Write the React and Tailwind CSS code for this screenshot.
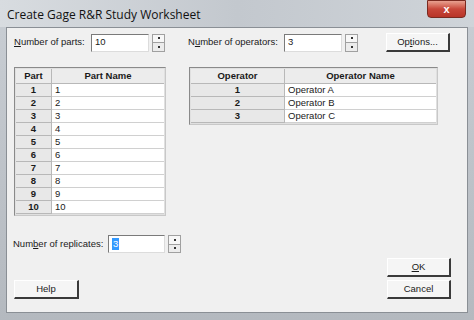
import React from 'react'

const font = { fontFamily: '"Liberation Sans", Arial, sans-serif' }

const Spinner = () => (
    <div className="flex flex-col w-[13px] h-[18px] border border-[#a0a0a0] bg-[#f0f0f0]">
        <div className="flex-1 flex items-center justify-center border-b border-[#a0a0a0] bg-[#f7f7f7]">
            <div className="w-[2px] h-[2px] bg-[#333]" />
        </div>
        <div className="flex-1 flex items-center justify-center bg-[#ececec]">
            <div className="w-[2px] h-[2px] bg-[#333]" />
        </div>
    </div>
)

const Field = ({ value, width, selected }) => (
    <div className={`${width} h-[18px] bg-white border border-t-[#7a7a7a] border-l-[#7a7a7a] border-r-[#dcdcdc] border-b-[#dcdcdc] flex items-center px-[3px] text-[9.5px] text-[#1a1a1a]`}>
        {selected ? <span className="bg-[#3399ff] text-white px-[1px] leading-[12px]">{value}</span> : value}
    </div>
)

const Button = ({ children, width = 'w-[64px]' }) => (
    <div className={`${width} h-[19px] flex items-center justify-center bg-[#f5f5f5] border border-t-[#ffffff] border-l-[#ffffff] border-r-[#3a3a3a] border-b-[#3a3a3a] border-r-2 border-b-2 text-[9.5px] text-[#1a1a1a]`}>
        {children}
    </div>
)

const Label = ({ children, width }) => (
    <div className={`${width} text-[9.5px] text-[#1a1a1a] whitespace-nowrap`}>{children}</div>
)

const parts = ['1', '2', '3', '4', '5', '6', '7', '8', '9', '10']
const operators = ['Operator A', 'Operator B', 'Operator C']

const Grid = ({ idHead, nameHead, idWidth, width, rows }) => (
    <div className={`${width} border border-[#8a8a8a] border-r-[#c8c8c8] border-b-[#c8c8c8] bg-[#e0e0e0] p-px`}>
        <div className="flex h-[15px] text-[9.5px] font-bold text-[#1a1a1a]">
            <div className={`${idWidth} flex items-center justify-center bg-[#ececec] border-r border-b border-[#b8b8b8]`}>{idHead}</div>
            <div className="flex-1 flex items-center justify-center bg-[#ececec] border-b border-[#b8b8b8]">{nameHead}</div>
        </div>
        {rows.map((r, i) => (
            <div key={i} className="flex h-[13px] text-[9.5px] text-[#1a1a1a]">
                <div className={`${idWidth} flex items-center justify-center bg-[#e8e8e8] font-bold border-r border-b border-[#b8b8b8]`}>{i + 1}</div>
                <div className="flex-1 flex items-center bg-white px-[3px] border-b border-[#d0d0d0]">{r}</div>
            </div>
        ))}
    </div>
)

export default function App() {
    return (
        <div className="w-[474px] h-[320px] flex flex-col bg-gradient-to-b from-[#c9ced4] to-[#b4b9bf] overflow-hidden" style={font}>
            {/* Title bar */}
            <div className="h-[27px] flex items-start bg-gradient-to-r from-[#d8dce0] via-[#c3c8ce] to-[#cfd4d9]">
                <div className="pl-[7px] pt-[6px] text-[12px] text-[#111]" style={{ fontFamily: '"Open Sans", "Liberation Sans", sans-serif' }}>
                    Create Gage R&amp;R Study Worksheet
                </div>
                <div className="ml-auto mr-[8px] w-[39px] h-[18px] rounded-b-[4px] border border-[#7a2a20] bg-gradient-to-b from-[#e8a090] via-[#c8473a] to-[#b83428] flex items-center justify-center text-white text-[11px] font-bold">
                    x
                </div>
            </div>

            {/* Client area */}
            <div className="flex-1 mx-[6px] mb-[7px] bg-[#f0f0f0] border border-[#8a8f95] flex flex-col">
                {/* top row */}
                <div className="flex items-center pl-[7px] pt-[5px]">
                    <Label width="w-[77px]"><u>N</u>umber of parts:</Label>
                    <Field value="10" width="w-[58px]" />
                    <div className="ml-[3px]"><Spinner /></div>
                    <div className="ml-[23px]">
                        <Label width="w-[96px]">N<u>u</u>mber of operators:</Label>
                    </div>
                    <Field value="3" width="w-[58px]" />
                    <div className="ml-[3px]"><Spinner /></div>
                    <div className="ml-[28px]">
                        <Button>Op<u>t</u>ions...</Button>
                    </div>
                </div>

                {/* tables */}
                <div className="flex items-start pl-[7px] mt-[15px]">
                    <Grid idHead="Part" nameHead="Part Name" idWidth="w-[36px]" width="w-[152px]" rows={parts} />
                    <div className="ml-[23px]">
                        <Grid idHead="Operator" nameHead="Operator Name" idWidth="w-[94px]" width="w-[249px]" rows={operators} />
                    </div>
                </div>

                {/* bottom */}
                <div className="flex-1 flex items-end pb-[13px]">
                    <div className="flex flex-col pl-[6px]">
                        <div className="flex items-center">
                            <Label width="w-[95px]">Num<u>b</u>er of replicates:</Label>
                            <Field value="3" width="w-[57px]" selected />
                            <div className="ml-[3px]"><Spinner /></div>
                        </div>
                        <div className="mt-[27px] ml-[1px]">
                            <Button width="w-[65px]">Help</Button>
                        </div>
                    </div>
                    <div className="ml-auto mr-[16px] flex flex-col gap-[3px]">
                        <Button><u>O</u>K</Button>
                        <Button>Cancel</Button>
                    </div>
                </div>
            </div>
        </div>
    )
}
